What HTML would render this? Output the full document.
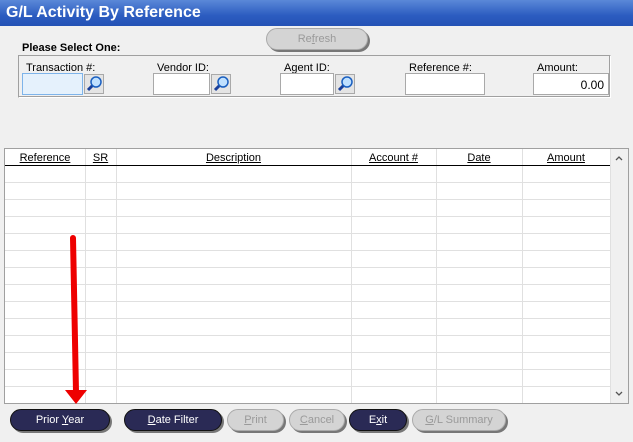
<!DOCTYPE html><html><head><style>
*{box-sizing:border-box;margin:0;padding:0}
body{width:633px;height:442px;background:#f0f0f0;font-family:"Liberation Sans",Arial,sans-serif;font-size:11px;position:relative;overflow:hidden}
.a{position:absolute}
.title{left:0;top:0;width:633px;height:26px;background:linear-gradient(#5a88d8,#2c5cc0 60%,#2452b5);color:#fff;font-weight:bold;font-size:16px;padding:4px 0 0 6px}
.lbl{font-size:11px;color:#000}
.in{background:#fff;border:1px solid #a9a9a9;height:22px}
.btn{height:22px;border-radius:11px;text-align:center;line-height:21px;font-size:11px;box-shadow:2px 2px 0 #777}
.dk{background:#2a2a55;color:#fff;border:1px solid #111}
.lt{background:#d4d4d4;color:#9a9a9a;border:1px solid #aaa}
.hd{top:152px;font-size:11px;text-decoration:underline;text-align:center}
</style></head><body>
<div class="a title">G/L Activity By Reference</div>
<div class="a btn lt" style="left:266px;top:28px;width:102px">Re<u>f</u>resh</div>
<div class="a lbl" style="left:22px;top:42px;font-weight:bold">Please Select One:</div>
<div class="a" style="left:18px;top:55px;width:593px;height:43px;border:1px solid #a0a0a0;border-right-color:#fff;border-bottom-color:#fff;box-shadow:inset -1px -1px 0 #a0a0a0"></div>
<div class="a lbl" style="left:26px;top:62px">Transaction #:</div>
<div class="a lbl" style="left:157px;top:62px">Vendor ID:</div>
<div class="a lbl" style="left:284px;top:62px">Agent ID:</div>
<div class="a lbl" style="left:409px;top:62px">Reference #:</div>
<div class="a lbl" style="left:537px;top:62px">Amount:</div>
<div class="a in" style="left:22px;top:73px;width:61px;background:#e5f1fc;border-color:#7eb4ea"></div>
<div class="a in" style="left:153px;top:73px;width:57px"></div>
<div class="a in" style="left:280px;top:73px;width:54px"></div>
<div class="a in" style="left:405px;top:73px;width:80px"></div>
<div class="a in" style="left:533px;top:73px;width:76px;text-align:right;padding:4px 4px 0 0;font-size:12px">0.00</div>
<svg class="a" style="left:84px;top:74px" width="20" height="20"><rect x=".5" y=".5" width="19" height="19" fill="#e4e4e4" stroke="#a9a9a9"/><line x1="4" y1="16" x2="9" y2="11" stroke="#1a3f9a" stroke-width="3"/><circle cx="12" cy="8" r="5" fill="#bfe0ff" stroke="#1a5fc0" stroke-width="1.5"/></svg>
<svg class="a" style="left:211px;top:74px" width="20" height="20"><rect x=".5" y=".5" width="19" height="19" fill="#e4e4e4" stroke="#a9a9a9"/><line x1="4" y1="16" x2="9" y2="11" stroke="#1a3f9a" stroke-width="3"/><circle cx="12" cy="8" r="5" fill="#bfe0ff" stroke="#1a5fc0" stroke-width="1.5"/></svg>
<svg class="a" style="left:335px;top:74px" width="20" height="20"><rect x=".5" y=".5" width="19" height="19" fill="#e4e4e4" stroke="#a9a9a9"/><line x1="4" y1="16" x2="9" y2="11" stroke="#1a3f9a" stroke-width="3"/><circle cx="12" cy="8" r="5" fill="#bfe0ff" stroke="#1a5fc0" stroke-width="1.5"/></svg>
<div class="a" style="left:4px;top:148px;width:625px;height:256px;background:#fff;border:1px solid #a0a0a0"></div>
<svg class="a" style="left:5px;top:149px" width="623" height="254">
<g stroke="#e0e0e0">
<line x1="80.5" y1="0" x2="80.5" y2="254"/><line x1="111.5" y1="0" x2="111.5" y2="254"/><line x1="346.5" y1="0" x2="346.5" y2="254"/><line x1="431.5" y1="0" x2="431.5" y2="254"/><line x1="517.5" y1="0" x2="517.5" y2="254"/><line x1="605.5" y1="0" x2="605.5" y2="254"/>
<line x1="0" y1="33.5" x2="605" y2="33.5"/><line x1="0" y1="50.5" x2="605" y2="50.5"/><line x1="0" y1="67.5" x2="605" y2="67.5"/><line x1="0" y1="84.5" x2="605" y2="84.5"/><line x1="0" y1="101.5" x2="605" y2="101.5"/><line x1="0" y1="118.5" x2="605" y2="118.5"/><line x1="0" y1="135.5" x2="605" y2="135.5"/><line x1="0" y1="152.5" x2="605" y2="152.5"/><line x1="0" y1="169.5" x2="605" y2="169.5"/><line x1="0" y1="186.5" x2="605" y2="186.5"/><line x1="0" y1="203.5" x2="605" y2="203.5"/><line x1="0" y1="220.5" x2="605" y2="220.5"/><line x1="0" y1="237.5" x2="605" y2="237.5"/>
</g>
<line x1="0" y1="16.5" x2="605" y2="16.5" stroke="#000"/>
<rect x="606" y="0" width="17" height="254" fill="#f0f0f0"/>
<path d="M611 11l3-3 3 3" fill="none" stroke="#555" stroke-width="1.3"/>
<path d="M611 243l3 3 3-3" fill="none" stroke="#555" stroke-width="1.3"/>
</svg>
<div class="a hd" style="left:5px;width:80px">Reference</div>
<div class="a hd" style="left:85px;width:31px">SR</div>
<div class="a hd" style="left:116px;width:235px">Description</div>
<div class="a hd" style="left:351px;width:85px">Account #</div>
<div class="a hd" style="left:436px;width:86px">Date</div>
<div class="a hd" style="left:522px;width:88px">Amount</div>
<div class="a btn dk" style="left:10px;top:409px;width:100px">Prior <u>Y</u>ear</div>
<div class="a btn dk" style="left:124px;top:409px;width:98px"><u>D</u>ate Filter</div>
<div class="a btn lt" style="left:227px;top:409px;width:57px"><u>P</u>rint</div>
<div class="a btn lt" style="left:289px;top:409px;width:56px"><u>C</u>ancel</div>
<div class="a btn dk" style="left:349px;top:409px;width:58px">E<u>x</u>it</div>
<div class="a btn lt" style="left:412px;top:409px;width:94px"><u>G</u>/L Summary</div>
<svg class="a" style="left:60px;top:234px" width="32" height="172"><path d="M13 4 L16 158" stroke="#e00" stroke-width="6" stroke-linecap="round"/><path d="M5 156 L27 156 L16 170 Z" fill="#e00"/></svg>
</body></html>
